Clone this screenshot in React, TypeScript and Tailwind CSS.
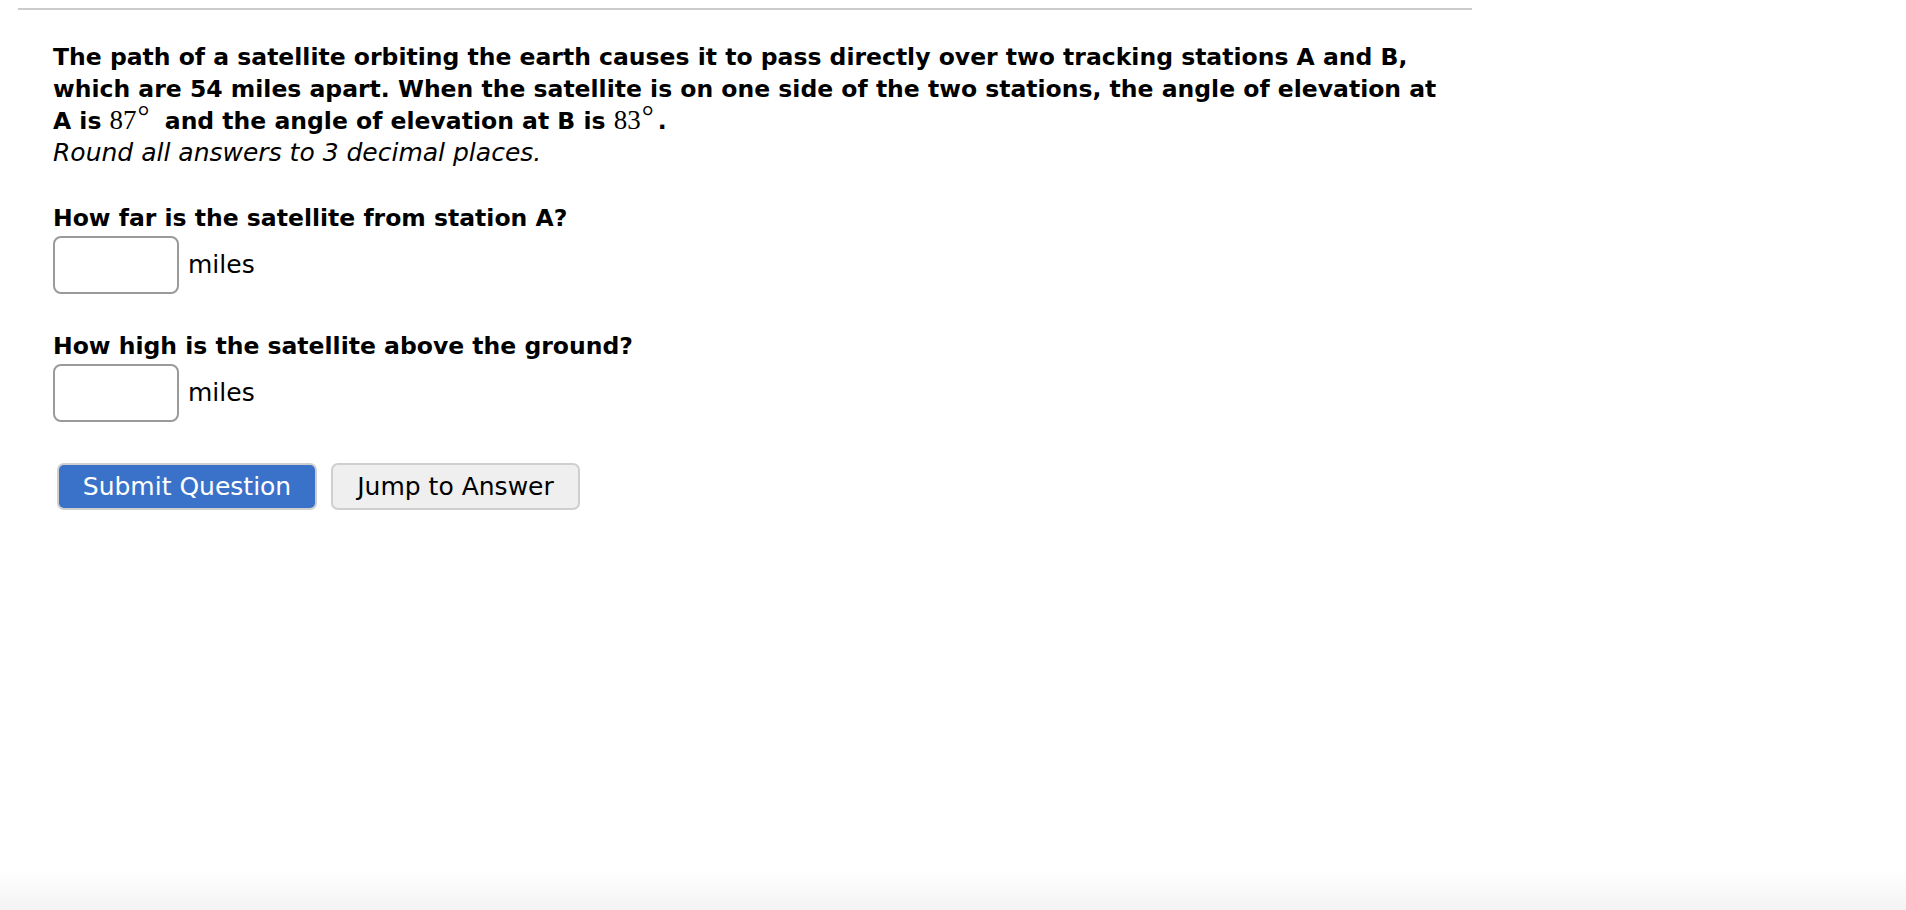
import React from "react";

const sans = "font-['DejaVu_Sans',_'Open_Sans',_sans-serif]";
const serif = "font-['Liberation_Serif',_'DejaVu_Serif',_serif] font-normal";

function Degrees({ value, gap }: { value: string; gap: string }) {
  return (
    <span className={`${serif} leading-[0]`}>
      <span className="text-[27px]">{value}</span>
      <span className={`relative top-[-3px] ml-[1px] text-[30px] ${gap}`}>°</span>
    </span>
  );
}

function AnswerRow({ label }: { label: string }) {
  return (
    <div className="flex flex-col">
      <p className="text-[23.5px] font-bold leading-[32px]">{label}</p>
      <div className="mt-[2px] flex items-center gap-[9px]">
        <input
          type="text"
          aria-label={label}
          className="h-[58px] w-[126px] rounded-[8px] border-2 border-[#9a9a9a] bg-white px-2 outline-none"
        />
        <span className="leading-[32px]">miles</span>
      </div>
    </div>
  );
}

export default function App() {
  return (
    <div className={`flex h-[910px] flex-col bg-white text-[25px] text-black ${sans}`}>
      <div className="mx-[18px] mt-[8px] w-[1454px] border-t-2 border-[#cccccc]" />

      <div className="ml-[53px] mt-[31px] flex flex-col">
        <p className="text-[23.5px] font-bold leading-[32px]">
          The path of a satellite orbiting the earth causes it to pass directly over two tracking stations A and B,
          <br />
          which are 54 miles apart. When the satellite is on one side of the two stations, the angle of elevation at
          <br />
          A is <Degrees value="87" gap="mr-[7px]" /> and the angle of elevation at B is <Degrees value="83" gap="mr-[4px]" />.
          <br />
          <span className="text-[25px] font-normal italic">Round all answers to 3 decimal places.</span>
        </p>

        <div className="mt-[33px] flex flex-col gap-[36px]">
          <AnswerRow label="How far is the satellite from station A?" />
          <AnswerRow label="How high is the satellite above the ground?" />
        </div>

        <div className="ml-[4px] mt-[41px] flex gap-[14px]">
          <button
            type="button"
            className="h-[47px] w-[260px] rounded-[7px] border-2 border-[#cfcfcf] bg-[#3a72c9] text-white"
          >
            Submit Question
          </button>
          <button
            type="button"
            className="h-[47px] w-[249px] rounded-[7px] border-2 border-[#cfcfcf] bg-[#efefef] text-black"
          >
            Jump to Answer
          </button>
        </div>
      </div>

      <div className="flex-1" />
      <div className="h-[40px] bg-gradient-to-b from-white to-[#f3f3f3]" />
    </div>
  );
}
